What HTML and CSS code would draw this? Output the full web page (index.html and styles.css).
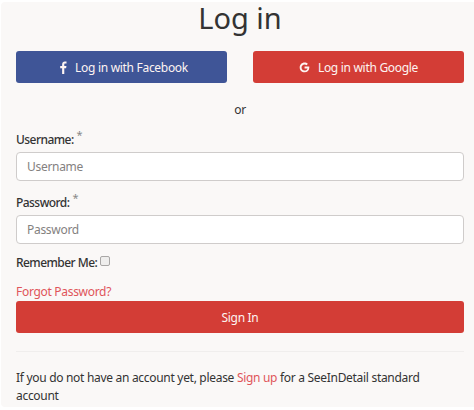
FILE: index.html
```html
<!DOCTYPE html>
<html lang="en">
<head>
<meta charset="utf-8">
<title>Log in</title>
<link rel="stylesheet" href="styles.css">
</head>
<body>
<main class="panel">
  <h1 class="title">Log in</h1>
  <div class="social">
    <a class="btn btn-fb" href="#">
      <svg class="icon icon-f" viewBox="0 0 10 16" aria-hidden="true"><path d="M6.600 16V8.900h2.300l.4-2.800H6.600V4.400c0-.8.2-1.300 1.400-1.300h1.400V.6C9.100.6 8.300.5 7.400.5 5.300.5 3.900 1.800 3.900 4.100v2H1.500v2.800h2.400V16z"/></svg>
      <span>Log in with Facebook</span>
    </a>
    <a class="btn btn-red" href="#">
      <svg class="icon icon-g" viewBox="0 0 16 16" aria-hidden="true"><path d="M8.100 6.700v2.600h4.300c-.4 1.900-1.900 3-4.300 3-2.500 0-4.400-2-4.400-4.400s1.900-4.400 4.400-4.400c1.100 0 2.100.4 2.900 1.100l1.900-1.900C11.600 1.500 10 .8 8.100.8 4.100.8 1 4 1 7.900s3.100 7.100 7.100 7.100c4.100 0 6.900-2.900 6.900-6.900 0-.5 0-.9-.1-1.400z"/></svg>
      <span>Log in with Google</span>
    </a>
  </div>
  <p class="or">or</p>
  <form class="form">
    <div class="field">
      <label class="label" for="username">Username:<sup class="req">*</sup></label>
      <input class="input" id="username" type="text" placeholder="Username">
    </div>
    <div class="field">
      <label class="label" for="password">Password:<sup class="req">*</sup></label>
      <input class="input" id="password" type="password" placeholder="Password">
    </div>
    <div class="remember">
      <label class="label" for="remember">Remember Me:</label>
      <input class="check" id="remember" type="checkbox">
    </div>
    <a class="link forgot" href="#">Forgot Password?</a>
    <button class="btn btn-red btn-block" type="button">Sign In</button>
  </form>
  <hr class="rule">
  <p class="note">If you do not have an account yet, please <a class="link" href="#">Sign up</a> for a SeeInDetail standard account</p>
</main>
</body>
</html>
```
FILE: styles.css
```css
* { box-sizing: border-box; }
html, body { margin: 0; padding: 0; background: #fff; }
body {
  width: 474px;
  height: 410px;
  overflow: hidden;
  padding: 2px 0 3px 1px;
  font-family: "Noto Sans", "Open Sans", sans-serif;
  font-size: 12px;
  letter-spacing: -.3px;
  color: #333;
}
.panel {
  height: 100%;
  padding: 0 10px 0 15px;
  background: #faf8f7;
  border-radius: 4px 0 0 4px;
}
.title {
  margin: 0;
  height: 49px;
  font-size: 29px;
  font-weight: 400;
  line-height: 31px;
  letter-spacing: 0;
  text-align: center;
  color: #333;
}
.social { display: flex; justify-content: space-between; }
.btn {
  display: flex;
  align-items: center;
  justify-content: center;
  gap: 8px;
  width: 211px;
  height: 32px;
  border: 0;
  border-radius: 3px;
  color: #fdf4f2;
  font: inherit;
  letter-spacing: inherit;
  text-decoration: none;
}
.btn-fb { background: #3f5597; padding-left: 4px; }
.btn-red { background: #d33d36; }
.btn-block { width: 100%; }
.icon { fill: currentColor; flex: none; }
.icon-f { width: 8px; height: 13px; }
.icon-g { width: 11px; height: 11px; }
.or { margin: 0; padding-top: 18px; height: 47px; line-height: 17px; text-align: center; }
.field { display: flex; flex-direction: column; }
.field + .field { margin-top: 12px; }
.label { font-weight: 500; color: #333; line-height: 19px; letter-spacing: -.55px; }
.req { color: #888; font-weight: 400; font-size: 11px; line-height: 0; margin-left: 3px; }
.input {
  height: 29px;
  margin-top: 3px;
  padding: 0 10px;
  border: 1px solid #cfcccb;
  border-radius: 4px;
  background: #fff;
  font: inherit;
  letter-spacing: inherit;
  color: #333;
}
.input::placeholder { color: #84817f; opacity: 1; }
.remember { display: flex; align-items: center; height: 20px; margin-top: 8px; }
.check {
  appearance: none;
  width: 10px;
  height: 10px;
  margin: 0 0 2px 3px;
  border: 1px solid #a9a7a6;
  border-radius: 2px;
  background: #efeeed;
}
.link { color: #e0555a; text-decoration: none; }
.forgot { display: block; height: 19px; margin-top: 10px; line-height: 19px; }
.rule { margin: 18px 0 0; border: 0; border-top: 1px solid #f0eeed; }
.note { margin: 17px 0 0; padding-right: 20px; line-height: 18px; letter-spacing: -.3px; }
```
